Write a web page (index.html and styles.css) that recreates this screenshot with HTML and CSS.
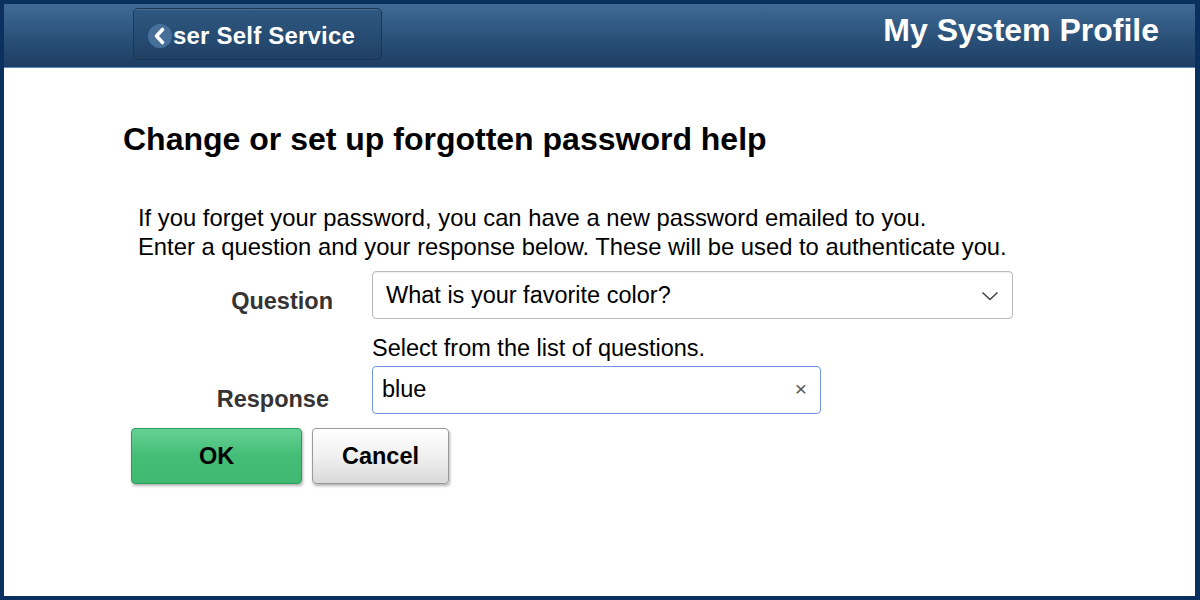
FILE: index.html
```html
<!DOCTYPE html>
<html lang="en">
<head>
<meta charset="utf-8">
<title>My System Profile</title>
<link rel="stylesheet" href="styles.css">
</head>
<body>
<div class="frame">
  <header class="topbar">
    <button class="back-btn" type="button">
      <span class="back-icon">
        <svg width="24" height="24" viewBox="0 0 24 24"><path d="M14.5 5.5 L8.5 12 L14.5 18.5" fill="none" stroke="#ffffff" stroke-width="3.6" stroke-linecap="round" stroke-linejoin="round"/></svg>
      </span>
      <span class="back-text">ser Self Service</span>
    </button>
    <h1 class="page-title">My System Profile</h1>
  </header>
  <main class="content">
    <h2 class="heading">Change or set up forgotten password help</h2>
    <p class="intro">If you forget your password, you can have a new password emailed to you.<br>Enter a question and your response below. These will be used to authenticate you.</p>
    <div class="form">
      <div class="row row-question">
        <label class="label">Question</label>
        <div class="field">
          <div class="select">
            <span>What is your favorite color?</span>
            <svg class="chev" width="18" height="12" viewBox="0 0 18 12"><path d="M1.5 2.5 L9 9.5 L16.5 2.5" fill="none" stroke="#444" stroke-width="1.6"/></svg>
          </div>
          <div class="hint">Select from the list of questions.</div>
        </div>
      </div>
      <div class="row row-response">
        <label class="label">Response</label>
        <div class="field">
          <div class="input">
            <span>blue</span>
            <span class="clear">&#215;</span>
          </div>
        </div>
      </div>
    </div>
    <div class="actions">
      <button class="btn btn-ok" type="button">OK</button>
      <button class="btn btn-cancel" type="button">Cancel</button>
    </div>
  </main>
</div>
</body>
</html>
```

FILE: styles.css
```css
* { box-sizing: border-box; }
html, body { margin: 0; padding: 0; }
body {
  width: 1200px;
  height: 600px;
  font-family: "Liberation Sans", Arial, sans-serif;
  background: #ffffff;
}
.frame {
  width: 1200px;
  height: 600px;
  border: 4px solid #0a305f;
  border-right-width: 5px;
  display: flex;
  flex-direction: column;
  background: #ffffff;
}
.topbar {
  height: 64px;
  flex: none;
  background: linear-gradient(#3f6b95, #2a5078 55%, #1d3e63);
  border-bottom: 1px solid #5c8bbd;
  display: flex;
  align-items: flex-start;
  justify-content: space-between;
  padding: 0 36px 0 129px;
}
.back-btn {
  width: 249px;
  height: 52px;
  margin-top: 4px;
  border: 1px solid #1b3757;
  border-radius: 5px;
  background: linear-gradient(#2f5880, #264b72 60%, #213f63);
  box-shadow: inset 0 1px 0 rgba(255,255,255,0.12);
  display: flex;
  align-items: center;
  padding: 4px 0 0 14px;
  font-family: inherit;
  cursor: pointer;
}
.back-icon {
  width: 24px;
  height: 24px;
  border-radius: 50%;
  background: #46709a;
  display: flex;
  align-items: center;
  justify-content: center;
  margin-right: 1px;
}
.back-text {
  color: #ffffff;
  font-size: 24px;
  font-weight: bold;
  letter-spacing: 0.2px;
}
.page-title {
  margin: 8px 0 0 0;
  color: #ffffff;
  font-size: 32px;
  font-weight: bold;
  line-height: 37px;
}
.content {
  padding: 0 0 0 119px;
}
.heading {
  margin: 52px 0 0 0;
  font-size: 32px;
  font-weight: bold;
  color: #000;
  line-height: 38px;
}
.intro {
  margin: 45px 0 0 15px;
  font-size: 23.8px;
  line-height: 29px;
  color: #000;
}
.form {
  margin-top: 10px;
}
.row {
  display: flex;
}
.label {
  width: 210px;
  text-align: right;
  font-size: 23.5px;
  line-height: 27px;
  font-weight: bold;
  color: #353333;
  flex: none;
}
.row-question .label { padding-top: 17px; }
.row-response .label { padding-top: 25px; width: 206px; margin-right: 4px; }
.field { margin-left: 39px; }
.select {
  width: 641px;
  height: 48px;
  border: 1px solid #b9b9b9;
  border-radius: 4px;
  box-shadow: inset 0 1px 1px rgba(0,0,0,0.06);
  display: flex;
  align-items: center;
  justify-content: space-between;
  padding: 0 13px 0 13px;
  font-size: 23.5px;
  color: #000;
}
.chev { margin-top: 1px; }
.hint {
  font-size: 23.5px;
  margin-top: 16px;
  line-height: 26px;
}
.input {
  width: 449px;
  height: 48px;
  margin-top: 5px;
  border: 1px solid #7392e4;
  border-radius: 4px;
  display: flex;
  align-items: center;
  justify-content: space-between;
  padding: 0 13px 2px 9px;
  font-size: 23.5px;
  color: #000;
}
.clear {
  font-size: 21px;
  color: #555;
}
.actions {
  display: flex;
  gap: 10px;
  margin-top: 14px;
  margin-left: 8px;
}
.btn {
  height: 56px;
  border-radius: 4px;
  font-family: inherit;
  font-size: 23.5px;
  font-weight: bold;
  color: #000;
  box-shadow: 1px 2px 3px rgba(0,0,0,0.3);
  padding: 0;
}
.btn-ok {
  width: 171px;
  border: 1px solid #2c9a5a;
  background: linear-gradient(#65d194, #44bd77 50%, #3fb872);
}
.btn-cancel {
  width: 137px;
  border: 1px solid #9a9a9a;
  background: linear-gradient(#ffffff, #f0f0f0 50%, #d9d9d9);
}
```
